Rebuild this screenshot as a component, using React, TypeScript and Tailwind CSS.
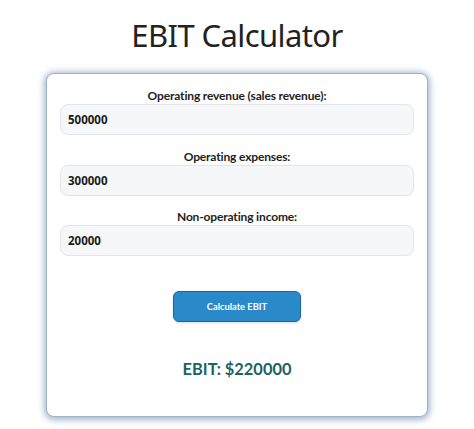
export default function App() {
  return (
    <main className="min-h-[429px] w-[474px] bg-white font-['Lato',sans-serif] text-[#1f1f1f]">
      <h1 className="pt-[13px] text-center font-['Noto_Sans',sans-serif] text-[31px] font-normal leading-[44px] tracking-[-0.6px] text-[#222]">
        EBIT Calculator
      </h1>

      <div className="mx-auto mt-[16px] w-[382px] rounded-[8px] border-[1.5px] border-[#9db3c8] bg-white px-[13px] pb-[36px] pt-[14px] shadow-[0_1px_6px_2px_rgba(90,125,160,0.55)]">
        <Field label="Operating revenue (sales revenue):" value="500000" />
        <Field label="Operating expenses:" value="300000" className="mt-[14px]" />
        <Field label="Non-operating income:" value="20000" className="mt-[13px]" />

        <div className="mt-[35px] flex justify-center">
          <button className="h-[31px] w-[128px] rounded-[6px] border border-[#1d64a0] bg-[#2a89c9] text-[9.3px] font-bold text-white shadow-[0_1px_3px_rgba(0,0,0,0.15)]">
            Calculate EBIT
          </button>
        </div>

        <p className="mt-[36px] text-center text-[16.4px] font-bold leading-[22px] text-[#1c6363]">
          EBIT: $220000
        </p>
      </div>
    </main>
  );
}

function Field({ label, value, className = "" }: { label: string; value: string; className?: string }) {
  return (
    <div className={className}>
      <label className="block text-center text-[12px] font-bold leading-[16px] tracking-[-0.15px] text-[#222]">
        {label}
      </label>
      <div className="flex h-[31px] items-center rounded-[8px] border border-[#e3e5e8] bg-[#f6f7f8] px-[7px] font-['Noto_Sans',sans-serif] text-[11.5px] font-bold text-[#1a1a1a]">
        {value}
      </div>
    </div>
  );
}
